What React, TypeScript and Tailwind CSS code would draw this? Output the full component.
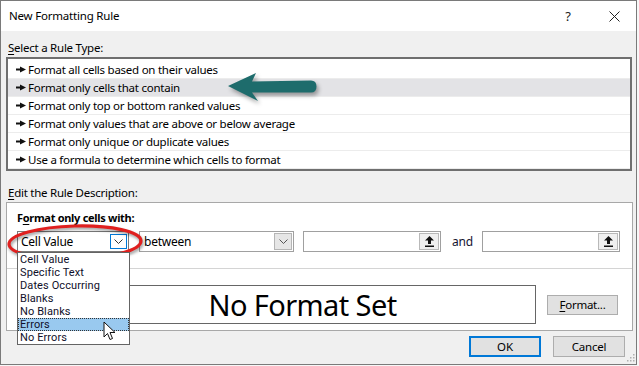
import React from "react";

const Bullet = () => (
  <svg width="10" height="7" viewBox="0 0 10 7" className="shrink-0">
    <rect x="0" y="2.5" width="5" height="2" fill="#111" />
    <polygon points="4,0.5 10,3.5 4,6.5" fill="#111" />
  </svg>
);

const Chevron = ({ color = "#333" }: { color?: string }) => (
  <svg width="9" height="5" viewBox="0 0 9 5">
    <polyline points="0.5,0.5 4.5,4.5 8.5,0.5" fill="none" stroke={color} strokeWidth="1" />
  </svg>
);

const RefIcon = () => (
  <svg width="9" height="11" viewBox="0 0 9 11">
    <polygon points="4.5,0 9,4.5 6,4.5 6,8 3,8 3,4.5 0,4.5" fill="#111" />
    <rect x="0" y="9.5" width="9" height="1.5" fill="#111" />
  </svg>
);

const RefInput = ({ w }: { w: string }) => (
  <div className={`${w} h-[21px] bg-white border border-[#a0a0a0] flex items-center justify-end pr-[1px]`}>
    <div className="w-[20px] h-[17px] bg-[#f0f0f0] border border-[#b9b9b9] flex items-center justify-center">
      <RefIcon />
    </div>
  </div>
);

const rules = [
  "Format all cells based on their values",
  "Format only cells that contain",
  "Format only top or bottom ranked values",
  "Format only values that are above or below average",
  "Format only unique or duplicate values",
  "Use a formula to determine which cells to format",
];

const options = [
  "Cell Value",
  "Specific Text",
  "Dates Occurring",
  "Blanks",
  "No Blanks",
  "Errors",
  "No Errors",
];

export default function App() {
  return (
    <div className="relative w-[639px] h-[366px] bg-[#f7f7f7] overflow-hidden font-['Noto_Sans',sans-serif] text-[11.5px] text-black leading-[16px]">
      <div className="flex flex-col w-[637px] h-[365px] border border-[#7a7a7a] bg-[#f0f0f0]">
        {/* Title bar */}
        <div className="h-[30px] bg-white flex items-center pl-[8px] pr-[16px] shrink-0">
          <span className="text-[11.5px] tracking-[-0.2px]">New Formatting Rule</span>
          <span className="ml-auto mr-[38px] text-[13px] text-[#222]">?</span>
          <svg width="11" height="11" viewBox="0 0 11 11">
            <path d="M0.5 0.5 L10.5 10.5 M10.5 0.5 L0.5 10.5" stroke="#222" strokeWidth="1" />
          </svg>
        </div>

        <div className="flex flex-col pl-[5px] pr-[4px]">
          {/* Select a Rule Type */}
          <div className="mt-[9px] h-[16px] pl-[2px] tracking-[-0.25px]">
            <span className="underline underline-offset-2">S</span>elect a Rule Type:
          </div>
          <div className="mt-[1px] w-[626px] h-[114px] border-2 border-[#6f6f6f] bg-white pt-[2px]">
            {rules.map((r, i) => (
              <div
                key={r}
                className={`h-[18px] flex items-center gap-[2px] pl-[8px] border-b border-[#ececec] tracking-[-0.25px] ${
                  i === 1 ? "bg-[#e3e3e6]" : ""
                }`}
              >
                <Bullet />
                <span>{r}</span>
              </div>
            ))}
          </div>

          {/* Edit the Rule Description */}
          <div className="mt-[14px] h-[16px] pl-[2px] tracking-[-0.25px]">
            <span className="underline underline-offset-2">E</span>dit the Rule Description:
          </div>
          <div className="mt-[1px] w-[627px] h-[129px] border border-[#a8a8a8] bg-white flex flex-col">
            <div className="mt-[7px] h-[16px] pl-[10px] text-[11px] font-bold tracking-[-0.3px]">
              F<span className="underline underline-offset-2">o</span>rmat only cells with:
            </div>
            <div className="mt-[5px] h-[21px] pl-[10px] flex items-center">
              {/* Combo 1 */}
              <div className="w-[112px] h-[21px] bg-white border border-[#7a7a7a] flex items-center pl-[3px] pr-[1px]">
                <span className="text-[12px] tracking-[-0.25px]">Cell Value</span>
                <div className="ml-auto w-[17px] h-[15px] border border-[#0078d7] bg-white flex items-center justify-center">
                  <Chevron />
                </div>
              </div>
              {/* Combo 2 */}
              <div className="ml-[10px] w-[155px] h-[21px] bg-white border border-[#a0a0a0] flex items-center pl-[4px] pr-[1px]">
                <span className="text-[12px] tracking-[-0.25px]">between</span>
                <div className="ml-auto w-[18px] h-[17px] border border-[#b5b5b5] bg-[#e6e6e6] flex items-center justify-center">
                  <Chevron color="#555" />
                </div>
              </div>
              <div className="ml-[9px]">
                <RefInput w="w-[138px]" />
              </div>
              <span className="ml-[11px] w-[20px] text-[12px] tracking-[-0.25px] text-[#141430]">and</span>
              <div className="ml-[10px]">
                <RefInput w="w-[138px]" />
              </div>
            </div>
            {/* Preview section */}
            <div className="mt-[16px] border-t border-[#d4d4d4] flex-1 flex items-start pt-[16px] pl-[62px]">
              <div className="w-[467px] h-[39px] border border-[#666] bg-white flex items-center justify-center">
                <span className="text-[29px] leading-[36px] tracking-[-0.6px]">No Format Set</span>
              </div>
              <div className="ml-[11px] mt-[10px] w-[71px] h-[20px] bg-[#e1e1e1] border border-[#adadad] flex items-center justify-center tracking-[-0.25px]">
                <span className="underline underline-offset-2">F</span>ormat...
              </div>
            </div>
          </div>

          {/* Buttons */}
          <div className="mt-[5px] flex justify-end pr-[7px] gap-[12px]">
            <div className="w-[72px] h-[21px] bg-[#e1e1e1] border-2 border-[#0078d7] flex items-center justify-center">
              OK
            </div>
            <div className="w-[72px] h-[21px] bg-[#e1e1e1] border border-[#adadad] flex items-center justify-center tracking-[-0.25px]">
              Cancel
            </div>
          </div>
        </div>
      </div>

      {/* Resize grip */}
      <svg className="absolute left-[627px] top-[354px]" width="8" height="8" viewBox="0 0 8 8">
        <rect x="6" y="0" width="1.5" height="1.5" fill="#b0b0b0" />
        <rect x="3" y="3" width="1.5" height="1.5" fill="#b0b0b0" />
        <rect x="6" y="3" width="1.5" height="1.5" fill="#b0b0b0" />
        <rect x="0" y="6" width="1.5" height="1.5" fill="#b0b0b0" />
        <rect x="3" y="6" width="1.5" height="1.5" fill="#b0b0b0" />
        <rect x="6" y="6" width="1.5" height="1.5" fill="#b0b0b0" />
      </svg>

      {/* Teal arrow annotation */}
      <svg
        className="absolute left-[222px] top-[66px] drop-shadow-[2px_3px_2px_rgba(0,0,0,0.35)]"
        width="100"
        height="40"
        viewBox="0 0 100 40"
      >
        <path
          d="M6 20 L34 7 L30 15.5 L89 14.5 Q94.5 14.5 94.5 20.5 Q94.5 26.5 89 26.5 L30 26.5 L36 35 Z"
          fill="#1e6c6c"
        />
      </svg>

      {/* Red ellipse annotation */}
      <svg
        className="absolute left-[4px] top-[221px] drop-shadow-[1px_2px_1.5px_rgba(0,0,0,0.4)]"
        width="144"
        height="44"
        viewBox="0 0 144 44"
      >
        <ellipse cx="71" cy="21.5" rx="66" ry="16.5" fill="none" stroke="#e0201f" strokeWidth="3.2" transform="rotate(-1.5 71 21.5)" />
      </svg>

      {/* Dropdown list */}
      <div className="absolute left-[17px] top-[252px] w-[113px] h-[93px] bg-white border border-[#646464] flex flex-col font-['Roboto',sans-serif]">
        {options.map((o) => (
          <div
            key={o}
            className={`h-[13px] leading-[13px] pl-[2px] text-[11px] tracking-[0.1px] text-[#10102a] ${
              o === "Errors" ? "bg-[#99c9ef] outline outline-1 outline-dotted outline-[#333] -outline-offset-1" : ""
            }`}
          >
            {o}
          </div>
        ))}
      </div>

      {/* Mouse cursor */}
      <svg className="absolute left-[103px] top-[321px]" width="13" height="21" viewBox="0 0 13 21">
        <path
          d="M1 1 L1 16 L4.5 12.5 L7 18.5 L9.5 17.5 L7 11.5 L12 11.5 Z"
          fill="white"
          stroke="#111"
          strokeWidth="1"
          strokeLinejoin="round"
        />
      </svg>
    </div>
  );
}
